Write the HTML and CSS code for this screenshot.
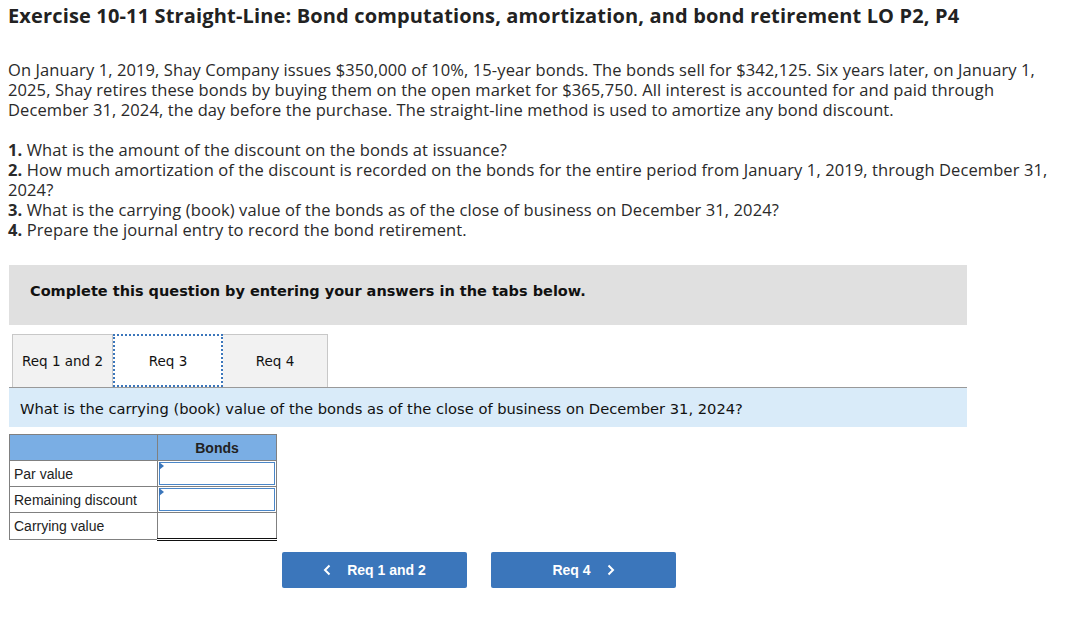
FILE: index.html
```html
<!DOCTYPE html>
<html lang="en">
<head>
  <meta charset="UTF-8">
  <title>Exercise 10-11 Straight-Line</title>
  <link rel="stylesheet" href="styles.css">
</head>
<body>
  <h1 class="title">Exercise 10-11 Straight-Line: Bond computations, amortization, and bond retirement LO P2, P4</h1>

  <p class="intro">On January 1, 2019, Shay Company issues $350,000 of 10%, 15-year bonds. The bonds sell for $342,125. Six years later, on January 1, 2025, Shay retires these bonds by buying them on the open market for $365,750. All interest is accounted for and paid through December 31, 2024, the day before the purchase. The straight-line method is used to amortize any bond discount.</p>

  <p class="questions">
    <b>1.</b> What is the amount of the discount on the bonds at issuance?<br>
    <b>2.</b> How much amortization of the discount is recorded on the bonds for the entire period from January 1, 2019, through December 31, 2024?<br>
    <b>3.</b> What is the carrying (book) value of the bonds as of the close of business on December 31, 2024?<br>
    <b>4.</b> Prepare the journal entry to record the bond retirement.
  </p>

  <div class="work">
    <div class="banner">Complete this question by entering your answers in the tabs below.</div>

    <div class="tabs">
      <div class="tab">Req 1 and 2</div>
      <div class="tab active">Req 3</div>
      <div class="tab">Req 4</div>
    </div>

    <div class="prompt">What is the carrying (book) value of the bonds as of the close of business on December 31, 2024?</div>

    <table class="grid">
      <tr>
        <th class="blank"></th>
        <th>Bonds</th>
      </tr>
      <tr>
        <td class="label">Par value</td>
        <td class="entry"><span class="box"></span></td>
      </tr>
      <tr>
        <td class="label">Remaining discount</td>
        <td class="entry"><span class="box"></span></td>
      </tr>
      <tr>
        <td class="label">Carrying value</td>
        <td class="total"></td>
      </tr>
    </table>

    <div class="nav">
      <button class="nav-btn">
        <svg class="chev" width="8" height="12" viewBox="0 0 8 12"><path d="M6.5 1.5 2 6l4.5 4.5" fill="none" stroke="white" stroke-width="2"/></svg>
        Req 1 and 2
      </button>
      <button class="nav-btn">
        Req 4
        <svg class="chev" width="8" height="12" viewBox="0 0 8 12"><path d="M1.5 1.5 6 6l-4.5 4.5" fill="none" stroke="white" stroke-width="2"/></svg>
      </button>
    </div>
  </div>
</body>
</html>
```

FILE: styles.css
```css
body {
  margin: 0;
  padding: 0 8px;
  font-family: 'Open Sans', 'Lato', sans-serif;
  color: #2a2a2a;
  background-color: white;
}
.title {
  font-family: 'Open Sans', sans-serif;
  font-size: 20px;
  font-weight: bold;
  letter-spacing: 0.15px;
  margin: 3px 0 0;
  line-height: 26px;
  color: #222;
}
.intro {
  font-size: 16.5px;
  letter-spacing: 0.1px;
  line-height: 20px;
  margin: 31px 0 20px;
  max-width: 1052px;
}
.questions {
  font-size: 16.5px;
  letter-spacing: 0.1px;
  line-height: 20px;
  margin: 0;
  max-width: 1052px;
}
.questions b {
  font-weight: bold;
}
.work {
  width: 958px;
  margin-left: 1px;
  margin-top: 25px;
}
.banner {
  background-color: #e0e0e0;
  height: 60px;
  line-height: 52px;
  padding-left: 21px;
  font-family: 'DejaVu Sans', Verdana, sans-serif;
  font-size: 14.5px;
  font-weight: bold;
  color: #111;
}
.tabs {
  display: flex;
  margin-top: 9px;
  padding-left: 3px;
  border-bottom: 1px solid #999;
  height: 53px;
}
.tab {
  width: 101px;
  box-sizing: border-box;
  border: 1px solid #c8c8c8;
  border-bottom: none;
  background-color: #f2f2f2;
  font-family: 'DejaVu Sans', Verdana, sans-serif;
  font-size: 13.5px;
  display: flex;
  align-items: center;
  justify-content: center;
  color: #111;
}
.tab.active {
  width: 110px;
  background-color: white;
  border: 2px dotted #3b76bb;
}
.tab:last-child {
  width: 105px;
  border-left: none;
}
.prompt {
  background-color: #d9ebf9;
  height: 39px;
  line-height: 42px;
  padding-left: 11px;
  font-family: 'DejaVu Sans', Verdana, sans-serif;
  font-size: 14.7px;
  color: #111;
}
.grid {
  border-collapse: collapse;
  margin-top: 7px;
  font-family: 'Liberation Sans', Arial, sans-serif;
  font-size: 14px;
}
.grid th {
  background-color: #7aaee4;
  height: 25px;
  border: 1px solid #808080;
  font-weight: bold;
  color: #222;
  padding: 0;
  width: 118px;
}
.grid th.blank {
  width: 147px;
}
.grid td {
  border: 1px solid #808080;
  height: 25px;
  padding: 0;
}
.label {
  padding-left: 4px !important;
  color: #222;
}
.entry {
  position: relative;
}
.box {
  display: block;
  height: 21px;
  margin: 1px;
  border: 1px solid #4a86c8;
}
.entry::before {
  content: "";
  position: absolute;
  left: 1px;
  top: 1px;
  border-left: 5px solid #3b76bb;
  border-top: 4px solid transparent;
  border-bottom: 4px solid transparent;
}
.total {
  border-bottom: 3px double #111 !important;
}
.nav {
  display: flex;
  gap: 24px;
  margin-top: 11px;
  padding-left: 273px;
}
.nav-btn {
  width: 185px;
  height: 36px;
  background-color: #3b76bb;
  color: white;
  border: none;
  border-radius: 2px;
  font-family: 'Liberation Sans', Arial, sans-serif;
  font-size: 14px;
  font-weight: bold;
  display: flex;
  align-items: center;
  justify-content: center;
  gap: 16px;
}
```
